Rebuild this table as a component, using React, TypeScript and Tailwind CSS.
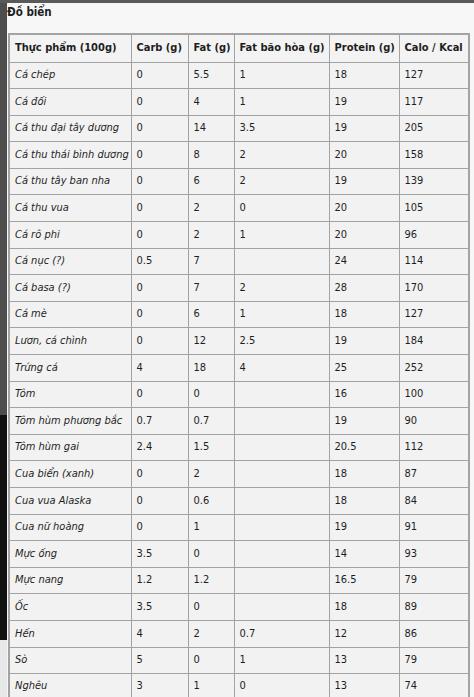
const rows: [string, string, string, string, string, string][] = [
  ['Cá chép', '0', '5.5', '1', '18', '127'],
  ['Cá đối', '0', '4', '1', '19', '117'],
  ['Cá thu đại tây dương', '0', '14', '3.5', '19', '205'],
  ['Cá thu thái bình dương', '0', '8', '2', '20', '158'],
  ['Cá thu tây ban nha', '0', '6', '2', '19', '139'],
  ['Cá thu vua', '0', '2', '0', '20', '105'],
  ['Cá rô phi', '0', '2', '1', '20', '96'],
  ['Cá nục (?)', '0.5', '7', '', '24', '114'],
  ['Cá basa (?)', '0', '7', '2', '28', '170'],
  ['Cá mè', '0', '6', '1', '18', '127'],
  ['Lươn, cá chình', '0', '12', '2.5', '19', '184'],
  ['Trứng cá', '4', '18', '4', '25', '252'],
  ['Tôm', '0', '0', '', '16', '100'],
  ['Tôm hùm phương bắc', '0.7', '0.7', '', '19', '90'],
  ['Tôm hùm gai', '2.4', '1.5', '', '20.5', '112'],
  ['Cua biển (xanh)', '0', '2', '', '18', '87'],
  ['Cua vua Alaska', '0', '0.6', '', '18', '84'],
  ['Cua nữ hoàng', '0', '1', '', '19', '91'],
  ['Mực ống', '3.5', '0', '', '14', '93'],
  ['Mực nang', '1.2', '1.2', '', '16.5', '79'],
  ['Ốc', '3.5', '0', '', '18', '89'],
  ['Hến', '4', '2', '0.7', '12', '86'],
  ['Sò', '5', '0', '1', '13', '79'],
  ['Nghêu', '3', '1', '0', '13', '74'],
];

const headers = ['Thực phẩm (100g)', 'Carb (g)', 'Fat (g)', 'Fat bão hòa (g)', 'Protein (g)', 'Calo / Kcal'];
const widths = ['w-[122px]', 'w-[57px]', 'w-[46px]', 'w-[95px]', 'w-[70px]', 'w-[70px]'];

export default function App() {
  return (
    <div
      className="w-[474px] h-[697px] overflow-hidden bg-[#f7f7f7] text-[#1e1e1e]"
      style={{ fontFamily: '"DejaVu Sans Condensed", "DejaVu Sans", Verdana, sans-serif' }}
    >
      <div className="h-[3px] bg-[#5a5a5a]" />
      <div className="flex">
        <div className="w-[7px] shrink-0 flex flex-col">
          <div className="h-[412px] bg-[#4e4e4e]" />
          <div className="h-[225px] bg-[#111]" />
          <div className="h-[60px] bg-[#e8e8e8]" />
        </div>
        <div className="flex-1">
          <div className="h-[30px] pt-[2px] text-[11.5px] font-bold leading-[14px]">Đồ biển</div>
          <table className="ml-[1px] w-[460px] table-fixed border-collapse border-2 border-[#a3a3a3] text-[11px]">
            <colgroup>
              {widths.map((w, i) => (
                <col key={i} className={w} />
              ))}
            </colgroup>
            <thead>
              <tr className="h-[28px] bg-[#f3f3f3]">
                {headers.map((h) => (
                  <th key={h} className="border border-[#a3a3a3] px-[5px] text-left font-bold whitespace-nowrap">
                    {h}
                  </th>
                ))}
              </tr>
            </thead>
            <tbody>
              {rows.map((r) => (
                <tr key={r[0]} className="h-[26.6px] bg-[#f2f2f2]">
                  {r.map((c, i) => (
                    <td
                      key={i}
                      className={`border border-[#a3a3a3] px-[5px] whitespace-nowrap ${i === 0 ? 'italic' : ''}`}
                    >
                      {c}
                    </td>
                  ))}
                </tr>
              ))}
            </tbody>
          </table>
        </div>
      </div>
    </div>
  );
}
